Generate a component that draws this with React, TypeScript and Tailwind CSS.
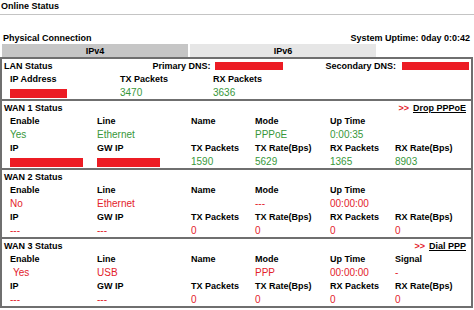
import React from 'react';

type Cell = { t?: string; c?: 'g' | 'r' | 'h'; bar?: number; pad?: boolean };

const green = 'text-[#37973a]';
const red = 'text-[#e3222b]';

function Value({ cell }: { cell: Cell }) {
  if (cell.bar) return <div className="h-[9px] bg-[#ec1c24]" style={{ width: cell.bar }} />;
  if (cell.c === 'h') return <span className="text-[9px] font-bold text-black">{cell.t}</span>;
  return (
    <span className={`text-[10px] ${cell.c === 'g' ? green : red} ${cell.pad ? 'pl-[3px]' : ''}`}>{cell.t}</span>
  );
}

function WanSection({ title, action, rows }: { title: string; action?: string; rows: Cell[][] }) {
  return (
    <div className="border-t-2 border-[#6f6f6f]">
      <div className="flex h-[13px] items-center justify-between pl-[2px] pr-[5px] pt-[2px]">
        <span className="text-[9px] font-bold">{title}</span>
        {action && (
          <span className="text-[9px] font-bold">
            <span className="text-[#e3222b] mr-[4px]">&gt;&gt;</span>
            <span className="underline">{action}</span>
          </span>
        )}
      </div>
      {rows.map((r, i) => (
        <div key={i} className="grid h-[13.5px] grid-cols-[87px_94px_64px_75px_65px_1fr] items-center pl-[8px] pt-[2px]">
          {r.map((cell, j) => (
            <div key={j} className="flex items-center">
              <Value cell={cell} />
            </div>
          ))}
        </div>
      ))}
    </div>
  );
}

const h = (t: string): Cell => ({ t, c: 'h' });
const g = (t: string): Cell => ({ t, c: 'g' });
const r = (t: string): Cell => ({ t, c: 'r' });
const empty: Cell = {};

export default function App() {
  return (
    <div className="w-[474px] h-[310px] overflow-hidden bg-white text-black font-['Liberation_Sans',Arial,sans-serif] leading-none">
      <div className="flex h-[15px] items-start border-b border-[#c4c4c4] pl-[1px] pt-[2px]">
        <span className="text-[9px] font-bold">Online Status</span>
      </div>

      <div className="mt-[17px] flex h-[12px] items-center justify-between pl-[3px] pr-[4px] pt-[1px]">
        <span className="text-[9px] font-bold">Physical Connection</span>
        <span className="text-[9px] font-bold">System Uptime: 0day 0:0:42</span>
      </div>

      <div className="flex h-[13px] pl-[2px]">
        <div className="flex w-[186px] items-center justify-center bg-[#c6c6c6] pt-[1px] text-[9px] font-bold">IPv4</div>
        <div className="ml-[2px] flex w-[186px] items-center justify-center bg-[#e6e6e6] pt-[1px] text-[9px] font-bold">IPv6</div>
      </div>

      <div className="w-[473px] border-x-2 border-b-2 border-[#6f6f6f]">
        <div className="border-t-2 border-[#6f6f6f]">
          <div className="flex h-[13px] items-center pl-[2px] pr-[2px] pt-[1px]">
            <span className="flex-1 text-[9px] font-bold">LAN Status</span>
            <span className="text-[9px] font-bold">Primary DNS:</span>
            <div className="ml-[5px] h-[8px] w-[68px] bg-[#ec1c24]" />
            <span className="ml-[42px] text-[9px] font-bold">Secondary DNS:</span>
            <div className="ml-[6px] h-[8px] w-[67px] bg-[#ec1c24]" />
          </div>
          <div className="grid h-[13.5px] grid-cols-[110px_93px_1fr] items-center pl-[8px] pt-[2px]">
            <Value cell={h('IP Address')} />
            <Value cell={h('TX Packets')} />
            <Value cell={h('RX Packets')} />
          </div>
          <div className="grid h-[13.5px] grid-cols-[110px_93px_1fr] items-center pl-[8px] pt-[2px]">
            <Value cell={{ bar: 57 }} />
            <Value cell={g('3470')} />
            <Value cell={g('3636')} />
          </div>
        </div>

        <WanSection
          title="WAN 1 Status"
          action="Drop PPPoE"
          rows={[
            [h('Enable'), h('Line'), h('Name'), h('Mode'), h('Up Time'), empty],
            [g('Yes'), g('Ethernet'), empty, g('PPPoE'), g('0:00:35'), empty],
            [h('IP'), h('GW IP'), h('TX Packets'), h('TX Rate(Bps)'), h('RX Packets'), h('RX Rate(Bps)')],
            [{ bar: 73 }, { bar: 63 }, g('1590'), g('5629'), g('1365'), g('8903')],
          ]}
        />

        <WanSection
          title="WAN 2 Status"
          rows={[
            [h('Enable'), h('Line'), h('Name'), h('Mode'), h('Up Time'), empty],
            [r('No'), r('Ethernet'), empty, r('---'), r('00:00:00'), empty],
            [h('IP'), h('GW IP'), h('TX Packets'), h('TX Rate(Bps)'), h('RX Packets'), h('RX Rate(Bps)')],
            [r('---'), r('---'), r('0'), r('0'), r('0'), r('0')],
          ]}
        />

        <WanSection
          title="WAN 3 Status"
          action="Dial PPP"
          rows={[
            [h('Enable'), h('Line'), h('Name'), h('Mode'), h('Up Time'), h('Signal')],
            [{ t: 'Yes', c: 'r', pad: true }, r('USB'), empty, r('PPP'), r('00:00:00'), r('-')],
            [h('IP'), h('GW IP'), h('TX Packets'), h('TX Rate(Bps)'), h('RX Packets'), h('RX Rate(Bps)')],
            [r('---'), r('---'), r('0'), r('0'), r('0'), r('0')],
          ]}
        />
      </div>
    </div>
  );
}
